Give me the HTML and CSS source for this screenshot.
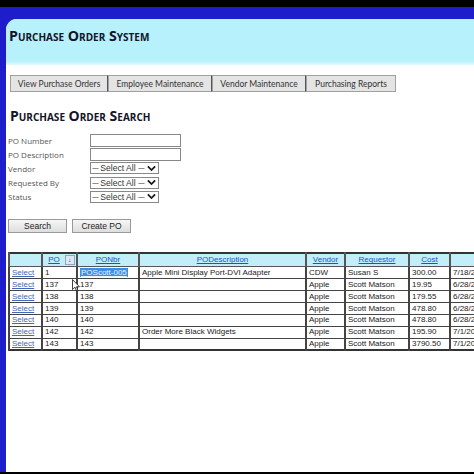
FILE: index.html
```html
<!DOCTYPE html>
<html>
<head>
<meta charset="utf-8">
<link rel="stylesheet" href="styles.css">
</head>
<body>
<div class="screen">
  <div class="frame">
    <div class="panel">
      <div class="header">
        <h1 class="title">Purchase Order System</h1>
      </div>
      <div class="content">
        <nav class="nav">
          <span class="tab tab-1">View Purchase Orders</span>
          <span class="tab tab-2">Employee Maintenance</span>
          <span class="tab tab-3">Vendor Maintenance</span>
          <span class="tab tab-4">Purchasing Reports</span>
        </nav>
        <h2 class="subtitle">Purchase Order Search</h2>
        <div class="form">
          <label class="lbl">PO Number</label><span class="input"></span>
          <label class="lbl">PO Description</label><span class="input"></span>
          <label class="lbl">Vendor</label><span class="select"><span><span class="dash">---</span> Select All <span class="dash">---</span></span><svg class="chev" viewBox="0 0 10 7" width="9" height="7"><path d="M1 1.2 L5 5.2 L9 1.2" fill="none" stroke="#1a1a1a" stroke-width="2"/></svg></span>
          <label class="lbl">Requested By</label><span class="select"><span><span class="dash">---</span> Select All <span class="dash">---</span></span><svg class="chev" viewBox="0 0 10 7" width="9" height="7"><path d="M1 1.2 L5 5.2 L9 1.2" fill="none" stroke="#1a1a1a" stroke-width="2"/></svg></span>
          <label class="lbl">Status</label><span class="select"><span><span class="dash">---</span> Select All <span class="dash">---</span></span><svg class="chev" viewBox="0 0 10 7" width="9" height="7"><path d="M1 1.2 L5 5.2 L9 1.2" fill="none" stroke="#1a1a1a" stroke-width="2"/></svg></span>
        </div>
        <div class="buttons">
          <span class="btn btn-search">Search</span>
          <span class="btn btn-create">Create PO</span>
        </div>
        <div class="table-wrap">
          <table class="grid">
            <colgroup>
              <col class="c-sel"><col class="c-po"><col class="c-nbr"><col class="c-desc"><col class="c-ven"><col class="c-req"><col class="c-cost"><col class="c-date">
            </colgroup>
            <thead>
              <tr>
                <th></th>
                <th><span class="po-cell"><a>PO</a><span class="sort">↓</span></span></th>
                <th><a>PONbr</a></th>
                <th><a>PODescription</a></th>
                <th><a>Vendor</a></th>
                <th><a>Requestor</a></th>
                <th><a>Cost</a></th>
                <th></th>
              </tr>
            </thead>
            <tbody>
              <tr><td><a>Select</a></td><td>1</td><td><span class="hl">POScott-005</span></td><td>Apple Mini Display Port-DVI Adapter</td><td>CDW</td><td>Susan S</td><td>300.00</td><td>7/18/2011</td></tr>
              <tr><td><a>Select</a></td><td>137</td><td>137</td><td></td><td>Apple</td><td>Scott Matson</td><td>19.95</td><td>6/28/2011</td></tr>
              <tr><td><a>Select</a></td><td>138</td><td>138</td><td></td><td>Apple</td><td>Scott Matson</td><td>179.55</td><td>6/28/2011</td></tr>
              <tr><td><a>Select</a></td><td>139</td><td>139</td><td></td><td>Apple</td><td>Scott Matson</td><td>478.80</td><td>6/28/2011</td></tr>
              <tr><td><a>Select</a></td><td>140</td><td>140</td><td></td><td>Apple</td><td>Scott Matson</td><td>478.80</td><td>6/28/2011</td></tr>
              <tr><td><a>Select</a></td><td>142</td><td>142</td><td>Order More Black Widgets</td><td>Apple</td><td>Scott Matson</td><td>195.90</td><td>7/1/2011</td></tr>
              <tr><td><a>Select</a></td><td>143</td><td>143</td><td></td><td>Apple</td><td>Scott Matson</td><td>3790.50</td><td>7/1/2011</td></tr>
            </tbody>
          </table>
          <svg class="cursor" viewBox="0 0 8 13" width="8" height="13"><path d="M0.5 0.5 L0.5 10.5 L3 8.2 L4.6 12 L6 11.4 L4.5 7.8 L7.5 7.8 Z" fill="#fff" stroke="#111" stroke-width="0.8"/></svg>
        </div>
      </div>
    </div>
  </div>
</div>
</body>
</html>
```
FILE: styles.css
```css
html, body {
  margin: 0;
  padding: 0;
  background: #000;
}
.screen {
  width: 474px;
  height: 474px;
  overflow: hidden;
  background: #000;
  padding-top: 7px;
  box-sizing: border-box;
}
.frame {
  height: 465px;
  background: #1d1dcc;
  padding: 12px 0 0 6px;
  box-sizing: border-box;
}
.panel {
  height: 453px;
  background: #fff;
  border-top-left-radius: 11px;
  overflow: hidden;
  font-family: "Open Sans", "DejaVu Sans", sans-serif;
}
.header {
  height: 46px;
  background: linear-gradient(to bottom, #b6f1fc 0, #b6f1fc 42px, #ffffff 48px);
  padding: 8px 0 0 3px;
  box-sizing: border-box;
}
.title {
  margin: 0;
  font-size: 14.2px;
  line-height: 18px;
  font-weight: 700;
  font-variant: small-caps;
  color: #141428;
}
.content {
  padding: 10px 0 0 2px;
}
.nav {
  display: flex;
  margin-left: 2px;
  height: 17px;
}
.tab {
  display: flex;
  align-items: center;
  justify-content: center;
  background: #e4e4e4;
  border: 1px solid #a0a0a0;
  border-right: 1px solid #555;
  font-family: Lato, "Open Sans", sans-serif;
  font-size: 8.5px;
  color: #333;
  box-sizing: border-box;
}
.tab-1 { width: 98px; }
.tab-2 { width: 104px; }
.tab-3 { width: 94px; }
.tab-4 { width: 90px; border-right-color: #a0a0a0; }
.subtitle {
  margin: 15px 0 0 2px;
  font-size: 14px;
  line-height: 18px;
  font-weight: 700;
  font-variant: small-caps;
  color: #141428;
}
.form {
  display: grid;
  grid-template-columns: 82px auto;
  grid-auto-rows: 14.2px;
  align-items: center;
  justify-items: start;
  margin-top: 8px;
}
.form .lbl {
  font-family: "Open Sans", sans-serif;
  font-size: 8px;
  color: #555;
}
.input {
  display: block;
  width: 91px;
  height: 13px;
  border: 1px solid #888;
  box-sizing: border-box;
  background: #fff;
}
.select {
  display: flex;
  align-items: center;
  justify-content: space-between;
  width: 69px;
  height: 12px;
  border: 1px solid #888;
  box-sizing: border-box;
  font-family: "Liberation Sans", Arial, sans-serif;
  font-size: 8.6px;
  color: #333;
  padding: 0 2px 0 1px;
  white-space: nowrap;
}
.dash {
  letter-spacing: -0.9px;
  color: #666;
}
.chev { flex: none; }
.buttons {
  display: flex;
  gap: 5px;
  margin-top: 15px;
}
.btn {
  display: flex;
  align-items: center;
  justify-content: center;
  height: 14px;
  border: 1px solid #999;
  background: linear-gradient(#f6f6f6, #dedede);
  font-family: "Liberation Sans", Arial, sans-serif;
  font-size: 8.5px;
  color: #222;
  box-sizing: border-box;
}
.btn-search { width: 59px; }
.btn-create { width: 59px; }
.table-wrap {
  position: relative;
  margin-top: 19px;
}
.grid {
  border-collapse: collapse;
  table-layout: fixed;
  width: 510px;
  font-family: "Liberation Sans", Arial, sans-serif;
  font-size: 8px;
  color: #222;
  border: 2px solid #333;
}
.c-sel { width: 33px; }
.c-po { width: 35px; }
.c-nbr { width: 62px; }
.c-desc { width: 167px; }
.c-ven { width: 39px; }
.c-req { width: 64px; }
.c-cost { width: 41px; }
.c-date { width: 69px; }
.grid thead tr { height: 14px; }
.grid tbody tr { height: 11.9px; }
.grid th {
  background: #c2eefa;
  border: 1px solid #555;
  border-left-width: 2px;
  font-weight: 400;
  text-align: center;
  padding: 0;
  line-height: 10px;
}
.grid th a {
  color: #1a55c8;
  text-decoration: underline;
}
.grid td {
  border: 1px solid #444;
  border-left-width: 2px;
  padding: 0 2px;
  line-height: 10px;
  text-align: left;
  white-space: nowrap;
  overflow: hidden;
}
.grid td a {
  color: #4466bb;
  text-decoration: underline;
}
.po-cell {
  display: inline-flex;
  align-items: center;
  gap: 5px;
  margin-left: 4px;
}
.sort {
  display: inline-block;
  width: 8px;
  height: 8px;
  border: 1px solid #8ab;
  background: #dde8f4;
  font-size: 6px;
  line-height: 8px;
  text-align: center;
  color: #225;
}
.hl {
  background: #3d8fe6;
  color: #e8f4ff;
  text-decoration: underline;
  padding: 0 1px;
}
.cursor {
  position: absolute;
  left: 64px;
  top: 27px;
}
```
